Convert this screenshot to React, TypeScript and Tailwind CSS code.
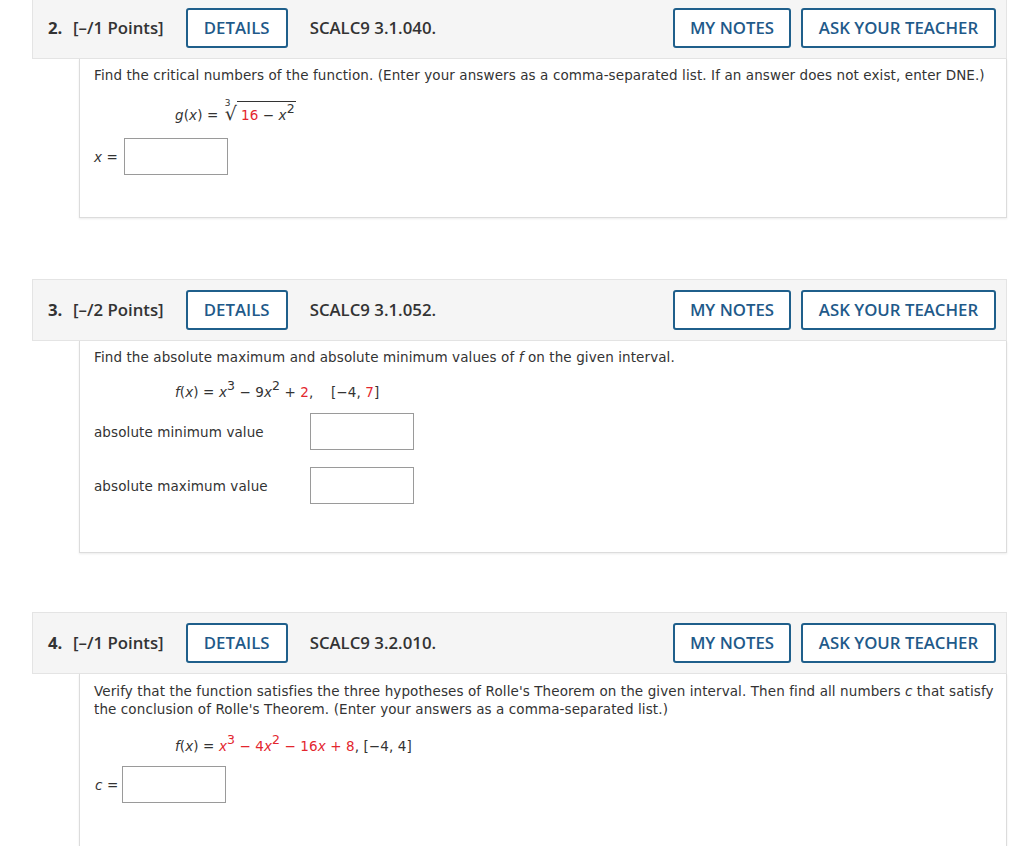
import React from 'react'

const headFont = { fontFamily: '"Open Sans", "Liberation Sans", sans-serif' }

const HeaderButton = ({ label, className = '' }: { label: string; className?: string }) => (
  <button
    className={`h-[40px] rounded-[3px] border-2 border-[#1f5f8b] bg-white text-[16.8px] font-semibold text-[#1f5a8a] ${className}`}
  >
    {label}
  </button>
)

const QuestionHeader = ({ num, points, code }: { num: string; points: string; code: string }) => (
  <div
    className="flex h-[62px] items-center border border-[#e4e4e4] bg-[#f5f5f5] pl-[15px] pr-[10px] text-[#333]"
    style={headFont}
  >
    <span className="w-[25px] text-[16.8px] font-bold">{num}</span>
    <span className="text-[16.8px] font-semibold">{points}</span>
    <HeaderButton label="DETAILS" className="ml-[22px] w-[102px]" />
    <span className="ml-[22px] text-[16.8px] font-semibold">{code}</span>
    <div className="ml-auto flex gap-[10px]">
      <HeaderButton label="MY NOTES" className="w-[118px]" />
      <HeaderButton label="ASK YOUR TEACHER" className="w-[195px]" />
    </div>
  </div>
)

const Body = ({ height, children }: { height: string; children: React.ReactNode }) => (
  <div
    className={`ml-[47px] border-x border-b border-[#dcdcdc] bg-white pl-[14px] text-[13.5px] leading-[18px] tracking-[0.1px] text-[#333] shadow-[0_1px_2px_rgba(0,0,0,0.08)] ${height}`}
    style={{ fontFamily: '"DejaVu Sans", Verdana, sans-serif' }}
  >
    {children}
  </div>
)

const Input = () => <div className="h-[37px] w-[104px] border border-[#9a9a9a] bg-white" />

const Red = ({ children }: { children: React.ReactNode }) => <span className="text-[#e3262e]">{children}</span>
const Sup = ({ children }: { children: React.ReactNode }) => (
  <sup className="top-[-7px] text-[12.5px] leading-none">{children}</sup>
)

export default function App() {
  return (
    <div className="min-h-screen bg-white pl-[32px] pr-[17px]">
      <div className="-mt-[3px]">
        <QuestionHeader num="2." points="[–/1 Points]" code="SCALC9 3.1.040." />
        <Body height="h-[159px]">
          <p className="pt-[7px] whitespace-nowrap">
            Find the critical numbers of the function. (Enter your answers as a comma-separated list. If an answer does
            not exist, enter DNE.)
          </p>
          <div className="mt-[17px] whitespace-pre pl-[81px]">
            <i>g</i>(<i>x</i>) ={' '}
            <span className="relative ml-[2px] inline-block">
              <span className="absolute -top-[5px] left-[0px] text-[9px] leading-none">3</span>
              <span className="text-[19px] leading-[18px]">√</span>
            </span>
            <span className="inline-block border-t border-[#333] pl-[4px] pr-[1px] pt-[4px]">
              <Red>16</Red> − <i>x</i>
              <Sup>2</Sup>
            </span>
          </div>
          <div className="mt-[14px] flex items-center">
            <span className="w-[30px]">
              <i>x</i> =
            </span>
            <Input />
          </div>
        </Body>
      </div>

      <div className="mt-[61px]">
        <QuestionHeader num="3." points="[–/2 Points]" code="SCALC9 3.1.052." />
        <Body height="h-[212px]">
          <p className="pt-[7px]">
            Find the absolute maximum and absolute minimum values of <i>f</i> on the given interval.
          </p>
          <div className="mt-[17px] h-[18px] whitespace-pre pl-[81px]">
            <i>f</i>(<i>x</i>) = <i>x</i>
            <Sup>3</Sup> − 9<i>x</i>
            <Sup>2</Sup> + <Red>2</Red>,{'    '}[−4, <Red>7</Red>]
          </div>
          <div className="mt-[12px] flex items-center">
            <span className="w-[216px]">absolute minimum value</span>
            <Input />
          </div>
          <div className="mt-[17px] flex items-center">
            <span className="w-[216px]">absolute maximum value</span>
            <Input />
          </div>
        </Body>
      </div>

      <div className="mt-[59px]">
        <QuestionHeader num="4." points="[–/1 Points]" code="SCALC9 3.2.010." />
        <Body height="h-[173px]">
          <p className="pt-[8px]">
            Verify that the function satisfies the three hypotheses of Rolle's Theorem on the given interval. Then find
            all numbers <i>c</i> that satisfy
            <br />
            the conclusion of Rolle's Theorem. (Enter your answers as a comma-separated list.)
          </p>
          <div className="mt-[19px] h-[18px] whitespace-pre pl-[81px]">
            <i>f</i>(<i>x</i>) ={' '}
            <Red>
              <i>x</i>
              <Sup>3</Sup> − 4<i>x</i>
              <Sup>2</Sup> − 16<i>x</i> + 8
            </Red>
            , [−4, 4]
          </div>
          <div className="mt-[11px] flex items-center">
            <span className="w-[28px] pl-[1px]">
              <i>c</i> =
            </span>
            <Input />
          </div>
        </Body>
      </div>
    </div>
  )
}
